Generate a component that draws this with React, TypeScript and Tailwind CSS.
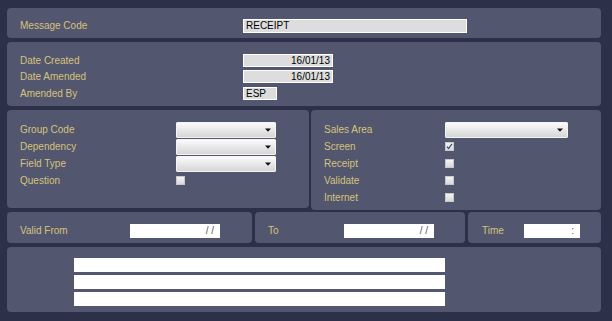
import React from "react";

const font = { fontFamily: '"Liberation Sans", Arial, sans-serif' };

function Panel({ className = "", children }: { className?: string; children?: React.ReactNode }) {
  return <div className={`rounded-[4px] bg-[#52566e] ${className}`}>{children}</div>;
}

function Label({ children, className = "" }: { children: React.ReactNode; className?: string }) {
  return <span className={`block text-[10px] leading-none text-[#d6c37c] ${className}`}>{children}</span>;
}

function GrayField({ value, className = "", right = false }: { value: string; className?: string; right?: boolean }) {
  return (
    <div
      className={`flex h-[13px] items-center border border-white bg-[#dddddd] px-[2px] text-[10px] leading-none text-black ${
        right ? "justify-end" : ""
      } ${className}`}
    >
      {value}
    </div>
  );
}

function WhiteField({ value = "", className = "" }: { value?: string; className?: string }) {
  return (
    <div className={`flex h-[14px] items-center justify-end bg-white pr-[6px] text-[10px] leading-none text-[#555] ${className}`}>
      {value}
    </div>
  );
}

function Dropdown({ className = "" }: { className?: string }) {
  return (
    <div
      className={`flex h-[16px] items-center justify-end rounded-[1px] border border-[#f4f4f4] bg-gradient-to-b from-[#fbfbfb] to-[#d6d6d6] pr-[4px] ${className}`}
    >
      <svg width="6" height="4" viewBox="0 0 6 4">
        <path d="M0 0.5h6L3 3.8z" fill="#111" />
      </svg>
    </div>
  );
}

function Check({ checked = false }: { checked?: boolean }) {
  return (
    <div className="flex h-[9px] w-[9px] items-center justify-center border border-[#c8c8cc] bg-gradient-to-b from-[#f4f4f4] to-[#d8d8d8]">
      {checked && (
        <svg width="7" height="7" viewBox="0 0 7 7">
          <path d="M1 3.6l1.6 2L6 0.8" stroke="#3a4275" strokeWidth="1.2" fill="none" />
        </svg>
      )}
    </div>
  );
}

function Row({ children }: { children: React.ReactNode }) {
  return <div className="flex h-[17px] items-center">{children}</div>;
}

export default function App() {
  return (
    <div
      style={font}
      className="flex h-[321px] w-[612px] flex-col gap-[4px] bg-[#2c3048] pb-[9px] pl-[7px] pr-[11px] pt-[8px] text-[10px] leading-none"
    >
      <Panel className="flex h-[30px] pl-[13px] pt-[11px]">
        <div className="flex h-[14px] w-[223px] items-center">
          <Label>Message Code</Label>
        </div>
        <GrayField value="RECEIPT" className="!h-[14px] w-[224px]" />
      </Panel>

      <Panel className="flex h-[64px] flex-col gap-[3px] pl-[13px] pt-[12px]">
        <div className="flex items-center">
          <div className="w-[223px]">
            <Label>Date Created</Label>
          </div>
          <GrayField value="16/01/13" right className="w-[90px]" />
        </div>
        <div className="flex items-center">
          <div className="w-[223px]">
            <Label>Date Amended</Label>
          </div>
          <GrayField value="16/01/13" right className="w-[90px]" />
        </div>
        <div className="mt-[1px] flex items-center">
          <div className="w-[223px]">
            <Label>Amended By</Label>
          </div>
          <GrayField value="ESP" className="w-[34px]" />
        </div>
      </Panel>

      <div className="-mb-[2px] flex h-[100px] gap-[2px]">
        <Panel className="flex h-[98px] w-[302px] flex-col pl-[13px] pt-[11px]">
          <Row>
            <div className="w-[156px]"><Label>Group Code</Label></div>
            <Dropdown className="w-[100px]" />
          </Row>
          <Row>
            <div className="w-[156px]"><Label>Dependency</Label></div>
            <Dropdown className="w-[100px]" />
          </Row>
          <Row>
            <div className="w-[156px]"><Label>Field Type</Label></div>
            <Dropdown className="w-[100px]" />
          </Row>
          <Row>
            <div className="w-[156px]"><Label>Question</Label></div>
            <Check />
          </Row>
        </Panel>
        <Panel className="flex flex-1 flex-col pl-[13px] pt-[11px]">
          <Row>
            <div className="w-[121px]"><Label>Sales Area</Label></div>
            <Dropdown className="w-[123px]" />
          </Row>
          <Row>
            <div className="w-[121px]"><Label>Screen</Label></div>
            <Check checked />
          </Row>
          <Row>
            <div className="w-[121px]"><Label>Receipt</Label></div>
            <Check />
          </Row>
          <Row>
            <div className="w-[121px]"><Label>Validate</Label></div>
            <Check />
          </Row>
          <Row>
            <div className="w-[121px]"><Label>Internet</Label></div>
            <Check />
          </Row>
        </Panel>
      </div>

      <div className="flex h-[31px] gap-[3px]">
        <Panel className="flex w-[245px] pl-[13px] pt-[12px]">
          <div className="flex h-[14px] w-[110px] items-center"><Label>Valid From</Label></div>
          <WhiteField value="/ /" className="w-[90px]" />
        </Panel>
        <Panel className="flex w-[210px] pl-[13px] pt-[12px]">
          <div className="flex h-[14px] w-[76px] items-center"><Label>To</Label></div>
          <WhiteField value="/ /" className="w-[90px]" />
        </Panel>
        <Panel className="flex flex-1 pl-[14px] pt-[12px]">
          <div className="flex h-[14px] w-[42px] items-center"><Label>Time</Label></div>
          <WhiteField value=":" className="w-[56px]" />
        </Panel>
      </div>

      <Panel className="flex flex-1 flex-col gap-[3px] pl-[67px] pt-[11px]">
        <div className="h-[14px] w-[371px] bg-white" />
        <div className="h-[14px] w-[371px] bg-white" />
        <div className="h-[14px] w-[371px] bg-white" />
      </Panel>
    </div>
  );
}
